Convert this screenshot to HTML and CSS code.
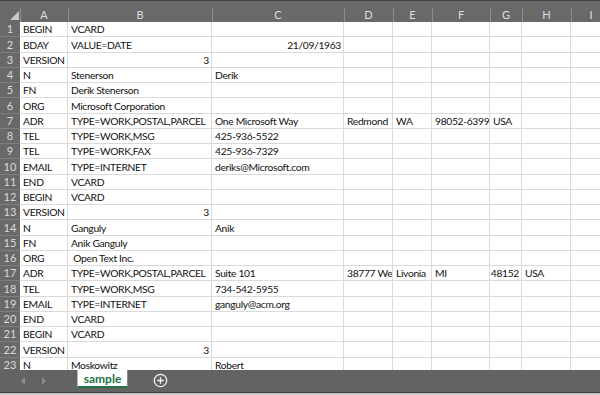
FILE: index.html
```html
<!DOCTYPE html>
<html>
<head>
<meta charset="utf-8">
<link rel="stylesheet" href="styles.css">
</head>
<body>
<div class="app">
  <div class="topline"></div>
  <div class="sheet">
    <div class="hdr">
      <div class="corner"><svg width="9" height="9" viewBox="0 0 9 9"><polygon points="9,0 9,9 0,9" fill="#c9c9c9"/></svg></div>
      <div class="h">A</div><div class="h">B</div><div class="h">C</div><div class="h">D</div><div class="h">E</div><div class="h">F</div><div class="h">G</div><div class="h">H</div><div class="h">I</div>
    </div>
    <div class="r"><div class="n">1</div><div class="c">BEGIN</div><div class="c">VCARD</div><div class="c"></div><div class="c"></div><div class="c"></div><div class="c"></div><div class="c"></div><div class="c"></div><div class="c"></div></div>
    <div class="r"><div class="n">2</div><div class="c">BDAY</div><div class="c">VALUE=DATE</div><div class="c num">21/09/1963</div><div class="c"></div><div class="c"></div><div class="c"></div><div class="c"></div><div class="c"></div><div class="c"></div></div>
    <div class="r"><div class="n">3</div><div class="c">VERSION</div><div class="c num">3</div><div class="c"></div><div class="c"></div><div class="c"></div><div class="c"></div><div class="c"></div><div class="c"></div><div class="c"></div></div>
    <div class="r"><div class="n">4</div><div class="c">N</div><div class="c">Stenerson</div><div class="c">Derik</div><div class="c"></div><div class="c"></div><div class="c"></div><div class="c"></div><div class="c"></div><div class="c"></div></div>
    <div class="r"><div class="n">5</div><div class="c">FN</div><div class="c">Derik Stenerson</div><div class="c"></div><div class="c"></div><div class="c"></div><div class="c"></div><div class="c"></div><div class="c"></div><div class="c"></div></div>
    <div class="r"><div class="n">6</div><div class="c">ORG</div><div class="c">Microsoft Corporation</div><div class="c"></div><div class="c"></div><div class="c"></div><div class="c"></div><div class="c"></div><div class="c"></div><div class="c"></div></div>
    <div class="r"><div class="n">7</div><div class="c">ADR</div><div class="c">TYPE=WORK,POSTAL,PARCEL</div><div class="c">One Microsoft Way</div><div class="c">Redmond</div><div class="c">WA</div><div class="c">98052-6399</div><div class="c">USA</div><div class="c"></div><div class="c"></div></div>
    <div class="r"><div class="n">8</div><div class="c">TEL</div><div class="c">TYPE=WORK,MSG</div><div class="c">425-936-5522</div><div class="c"></div><div class="c"></div><div class="c"></div><div class="c"></div><div class="c"></div><div class="c"></div></div>
    <div class="r"><div class="n">9</div><div class="c">TEL</div><div class="c">TYPE=WORK,FAX</div><div class="c">425-936-7329</div><div class="c"></div><div class="c"></div><div class="c"></div><div class="c"></div><div class="c"></div><div class="c"></div></div>
    <div class="r"><div class="n">10</div><div class="c">EMAIL</div><div class="c">TYPE=INTERNET</div><div class="c">deriks@Microsoft.com</div><div class="c"></div><div class="c"></div><div class="c"></div><div class="c"></div><div class="c"></div><div class="c"></div></div>
    <div class="r"><div class="n">11</div><div class="c">END</div><div class="c">VCARD</div><div class="c"></div><div class="c"></div><div class="c"></div><div class="c"></div><div class="c"></div><div class="c"></div><div class="c"></div></div>
    <div class="r"><div class="n">12</div><div class="c">BEGIN</div><div class="c">VCARD</div><div class="c"></div><div class="c"></div><div class="c"></div><div class="c"></div><div class="c"></div><div class="c"></div><div class="c"></div></div>
    <div class="r"><div class="n">13</div><div class="c">VERSION</div><div class="c num">3</div><div class="c"></div><div class="c"></div><div class="c"></div><div class="c"></div><div class="c"></div><div class="c"></div><div class="c"></div></div>
    <div class="r"><div class="n">14</div><div class="c">N</div><div class="c">Ganguly</div><div class="c">Anik</div><div class="c"></div><div class="c"></div><div class="c"></div><div class="c"></div><div class="c"></div><div class="c"></div></div>
    <div class="r"><div class="n">15</div><div class="c">FN</div><div class="c">Anik Ganguly</div><div class="c"></div><div class="c"></div><div class="c"></div><div class="c"></div><div class="c"></div><div class="c"></div><div class="c"></div></div>
    <div class="r"><div class="n">16</div><div class="c">ORG</div><div class="c">&nbsp;Open Text Inc.</div><div class="c"></div><div class="c"></div><div class="c"></div><div class="c"></div><div class="c"></div><div class="c"></div><div class="c"></div></div>
    <div class="r"><div class="n">17</div><div class="c">ADR</div><div class="c">TYPE=WORK,POSTAL,PARCEL</div><div class="c">Suite 101</div><div class="c">38777 West Six Mile Road</div><div class="c">Livonia</div><div class="c">MI</div><div class="c num">48152</div><div class="c">USA</div><div class="c"></div></div>
    <div class="r"><div class="n">18</div><div class="c">TEL</div><div class="c">TYPE=WORK,MSG</div><div class="c">734-542-5955</div><div class="c"></div><div class="c"></div><div class="c"></div><div class="c"></div><div class="c"></div><div class="c"></div></div>
    <div class="r"><div class="n">19</div><div class="c">EMAIL</div><div class="c">TYPE=INTERNET</div><div class="c">ganguly@acm.org</div><div class="c"></div><div class="c"></div><div class="c"></div><div class="c"></div><div class="c"></div><div class="c"></div></div>
    <div class="r"><div class="n">20</div><div class="c">END</div><div class="c">VCARD</div><div class="c"></div><div class="c"></div><div class="c"></div><div class="c"></div><div class="c"></div><div class="c"></div><div class="c"></div></div>
    <div class="r"><div class="n">21</div><div class="c">BEGIN</div><div class="c">VCARD</div><div class="c"></div><div class="c"></div><div class="c"></div><div class="c"></div><div class="c"></div><div class="c"></div><div class="c"></div></div>
    <div class="r"><div class="n">22</div><div class="c">VERSION</div><div class="c num">3</div><div class="c"></div><div class="c"></div><div class="c"></div><div class="c"></div><div class="c"></div><div class="c"></div><div class="c"></div></div>
    <div class="r"><div class="n">23</div><div class="c">N</div><div class="c">Moskowitz</div><div class="c">Robert</div><div class="c"></div><div class="c"></div><div class="c"></div><div class="c"></div><div class="c"></div><div class="c"></div></div>
  </div>
  <div class="tabbar">
    <div class="nav">
      <svg width="6" height="8" viewBox="0 0 6 8"><polygon points="5,0 5,8 1,4" fill="#8c8c8c"/></svg>
      <svg width="6" height="8" viewBox="0 0 6 8"><polygon points="1,0 1,8 5,4" fill="#8c8c8c"/></svg>
    </div>
    <div class="tab">sample</div>
    <div class="add"><svg width="15" height="15" viewBox="0 0 15 15"><circle cx="7.5" cy="7.5" r="6.2" fill="none" stroke="#f2f2f2" stroke-width="1.3"/><path d="M7.5 4.2v6.6M4.2 7.5h6.6" stroke="#f2f2f2" stroke-width="1.3"/></svg></div>
  </div>
  <div class="status"></div>
</div>
</body>
</html>
```
FILE: styles.css
```css
* { box-sizing: border-box; }
html, body { margin: 0; padding: 0; }
body { width: 600px; height: 395px; overflow: hidden; background: #ffffff; font-family: Lato, "Open Sans", sans-serif; }
.app { width: 600px; height: 395px; display: flex; flex-direction: column; }
.topline { height: 1px; background: #474747; flex: none; }
.sheet { height: 369px; overflow: hidden; flex: none; }
.hdr, .r { display: grid; grid-template-columns: 20px 48px 144px 132px 49px 39px 58px 32px 49px 40px; width: 611px; }
.hdr { height: 21px; background: #696969; }
.corner { display: flex; align-items: flex-end; justify-content: flex-end; padding: 0 1px 2px 0; }
.h { color: #dedede; font-size: 11px; display: flex; align-items: center; justify-content: center; padding-top: 6px;
  background: linear-gradient(#8e8e8e, #8e8e8e) left bottom / 1px 14px no-repeat; }
.r { height: 15.25px; }
.n { background: #696969; color: #dadada; font-size: 11px; display: flex; align-items: flex-end; justify-content: center; padding-bottom: 1px; line-height: 13px; border-bottom: 1px solid #7e7e7e; }
.c { border-right: 1px solid #dadada; border-bottom: 1px solid #dadada; font-size: 10.3px; letter-spacing: -0.33px; color: #111; white-space: pre; overflow: hidden; padding: 0 2px 0 3px; line-height: 14px; display: flex; align-items: flex-end; }
.c.num { justify-content: flex-end; }
.tabbar { height: 22px; background: #636363; flex: none; display: flex; align-items: flex-start; }
.nav { width: 77px; display: flex; gap: 15px; padding: 7px 0 0 20px; height: 100%; }
.tab { width: 51px; height: 18px; background: #ffffff; border-left: 1px solid #b5b5b5; border-right: 1px solid #8a8a8a; border-bottom: 2px solid #217346; color: #217346; font-weight: bold; font-size: 12px; display: flex; align-items: center; justify-content: center; padding-top: 1px; }
.add { margin-left: 25px; padding-top: 3px; display: flex; }
.status { height: 3px; background: #c8c8c8; border-top: 1px solid #3c3c3c; flex: none; }
```
